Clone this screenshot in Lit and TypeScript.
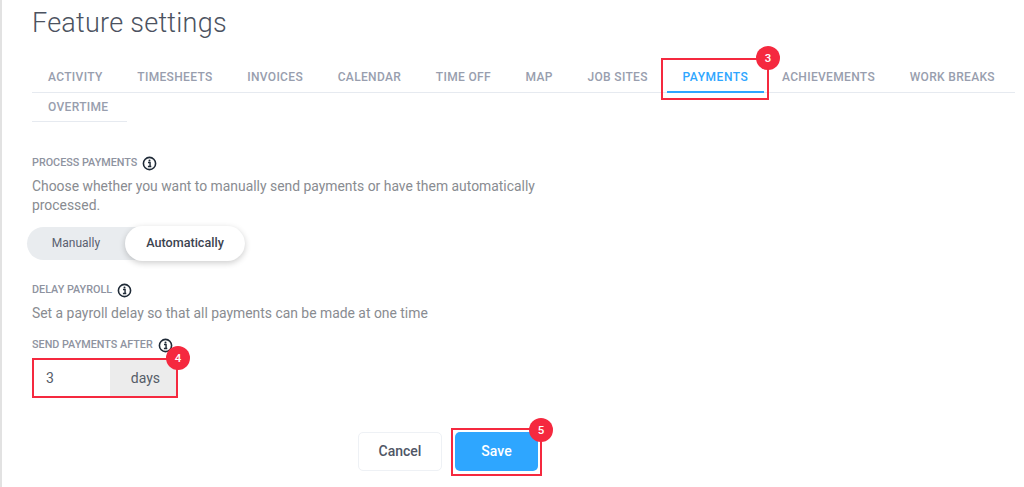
import { LitElement, html, css, svg } from "lit";
import { customElement } from "lit/decorators.js";

const info = html`<svg class="info" viewBox="0 0 16 16" width="15" height="15" aria-hidden="true">
  <circle cx="8" cy="8" r="6.5" fill="none" stroke="#1f2a37" stroke-width="1.7"></circle>
  <circle cx="8" cy="4.9" r="1.05" fill="#1f2a37"></circle>
  ${svg`<path d="M6.4 7h2.2v4M6.3 11.2h3.6" fill="none" stroke="#1f2a37" stroke-width="1.5"></path>`}
</svg>`;

@customElement("app-root")
export class AppRoot extends LitElement {
  static styles = css`
    :host { display: block; width: 1024px; height: 487px; overflow: hidden; background: #fff; box-sizing: border-box; border-left: 2px solid #e2e2e2; font-family: Roboto, "Liberation Sans", sans-serif; color: #7d828c; }
    .page { padding-left: 30px; padding-right: 9px; }
    h1 { margin: 0; height: 44px; padding-top: 5px; box-sizing: border-box; font-size: 27px; line-height: 36px; font-weight: 300; color: #4b5260; letter-spacing: 0.25px; }
    .tabrow { display: flex; height: 31px; border-bottom: 1px solid #e6eaf0; }
    .tabs { padding-top: 17px; }
    .tabrow.second { width: 95px; height: 28px; }
    .tab { position: relative; flex: none; padding: 0 16px; margin-right: 2.7px; font-size: 12px; font-weight: 500; line-height: 33px; letter-spacing: 0.33px; color: #989eae; white-space: nowrap; }
    .second .tab { line-height: 29px; }
    .tab.active { color: #2ea6ff; letter-spacing: 0.55px; margin-right: 1.6px; }
    .tab.active::after { content: ""; position: absolute; left: 0; right: 0; bottom: -1px; height: 2px; background: #2ea6ff; }
    .mark { position: absolute; border: 2px solid #f5293f; box-sizing: border-box; pointer-events: none; }
    .badge { position: absolute; width: 24px; height: 24px; border-radius: 50%; background: #f5293f; color: #fff; font-size: 11.5px; font-weight: 500; line-height: 24px; text-align: center; }
    .label { display: flex; align-items: center; gap: 5px; font-size: 10.8px; font-weight: 500; line-height: 16px; color: #8e93a0; }
    .info { flex: none; }
    .section1 { margin-top: 33px; }
    .desc { width: 520px; margin: 6px 0 0; font-size: 13.9px; line-height: 19px; color: #898c91; }
    .switch { display: flex; width: 218px; height: 33px; margin-top: 12px; margin-left: -5px; border-radius: 17px; background: #e9ecef; font-size: 12px; line-height: 33px; }
    .opt { width: 98px; text-align: center; color: #5a6070; }
    .opt.on { width: 120px; margin-top: -1px; height: 35px; line-height: 34px; border-radius: 18px; background: #fff; box-shadow: 0 2px 6px rgba(0,0,0,.2); color: #3c4350; font-size: 12.6px; font-weight: 500; }
    .section2 { margin-top: 22px; }
    .section2 .desc { margin-top: 6px; }
    .sub { margin-top: 14px; }
    .inputgroup { position: relative; display: flex; width: 146px; height: 40px; margin-top: 5px; font-size: 14px; line-height: 40px; color: #555c68; }
    .input { width: 78px; padding-left: 14px; box-sizing: border-box; }
    .addon { flex: 1; background: #ececec; text-align: right; padding-right: 18px; }
    .inputgroup .mark { inset: 0; }
    .actions { display: flex; justify-content: center; gap: 13px; width: 836px; margin-top: 34px; margin-left: -2px; }
    .btn { position: relative; display: block; width: 84px; height: 39px; border-radius: 5px; box-sizing: border-box; font-size: 14px; font-weight: 500; line-height: 37px; text-align: center; }
    .cancel { border: 1.5px solid #eef1f5; color: #4f5666; }
    .save { width: 83px; background: #2ea6ff; color: #fff; line-height: 39px; }
    .save .mark { inset: -4px -4px -5px -4px; }
  `;

  render() {
    return html`<div class="page">
      <h1>Feature settings</h1>
      <div class="tabs">
        <div class="tabrow">
          ${["ACTIVITY", "TIMESHEETS", "INVOICES", "CALENDAR", "TIME OFF", "MAP", "JOB SITES"].map((t) => html`<div class="tab">${t}</div>`)}
          <div class="tab active">PAYMENTS
            <div class="mark" style="inset:-3px -5px -8px -6px"></div>
            <div class="badge" style="top:-15px;right:-16px">3</div>
          </div>
          ${["ACHIEVEMENTS", "WORK BREAKS"].map((t) => html`<div class="tab">${t}</div>`)}
        </div>
        <div class="tabrow second"><div class="tab">OVERTIME</div></div>
      </div>

      <div class="section1">
        <div class="label">PROCESS PAYMENTS ${info}</div>
        <p class="desc">Choose whether you want to manually send payments or have them automatically processed.</p>
        <div class="switch"><div class="opt">Manually</div><div class="opt on">Automatically</div></div>
      </div>

      <div class="section2">
        <div class="label">DELAY PAYROLL ${info}</div>
        <p class="desc">Set a payroll delay so that all payments can be made at one time</p>
        <div class="label sub">SEND PAYMENTS AFTER ${info}</div>
        <div class="inputgroup">
          <div class="input">3</div><div class="addon">days</div>
          <div class="mark"></div>
          <div class="badge" style="top:-12px;right:-12px">4</div>
        </div>
      </div>

      <div class="actions">
        <div class="btn cancel">Cancel</div>
        <div class="btn save">Save
          <div class="mark"></div>
          <div class="badge" style="top:-14px;right:-15px">5</div>
        </div>
      </div>
    </div>`;
  }
}
